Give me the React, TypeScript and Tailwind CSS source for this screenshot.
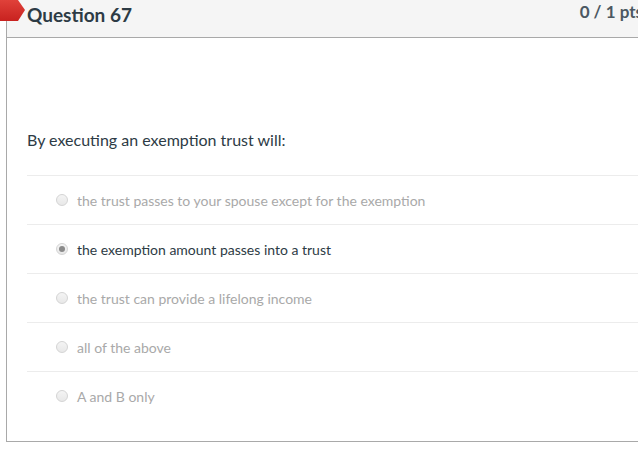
const answers = [
  { text: "the trust passes to your spouse except for the exemption", selected: false },
  { text: "the exemption amount passes into a trust", selected: true },
  { text: "the trust can provide a lifelong income", selected: false },
  { text: "all of the above", selected: false },
  { text: "A and B only", selected: false },
];

function Radio({ checked }: { checked: boolean }) {
  return (
    <span className="w-[12px] h-[12px] rounded-full border border-[#d4d4d4] bg-gradient-to-b from-[#f4f4f4] to-[#e8e8e8] flex items-center justify-center flex-shrink-0">
      {checked && <span className="w-[6px] h-[6px] rounded-full bg-[#8a8a8a]" />}
    </span>
  );
}

export default function App() {
  return (
    <div className="w-[638px] h-[469px] overflow-hidden bg-white font-['Lato','Noto_Sans',sans-serif] relative">
      {/* Red flag */}
      <svg className="absolute left-0 top-0 z-10" width="26" height="22" viewBox="0 0 26 22">
        <defs>
          <linearGradient id="flag" x1="0" y1="0" x2="0" y2="1">
            <stop offset="0" stopColor="#e0413a" />
            <stop offset="1" stopColor="#c8221f" />
          </linearGradient>
        </defs>
        <polygon points="0,0 18,0 25,10 18,21 0,21" fill="url(#flag)" />
      </svg>

      <div className="ml-[6px] w-[650px] border-l border-b border-[#a9a9a9]">
        {/* Header */}
        <div className="h-[38px] bg-[#f5f5f5] border-b border-[#a9a9a9] flex items-start justify-between pl-[20px] pr-[13px]">
          <h2 className="text-[19px] font-bold text-[#2d3b45] leading-none mt-[5px]">Question 67</h2>
          <span className="text-[17px] font-bold text-[#4c5862] leading-none mt-[3px]">0 / 1 pts</span>
        </div>

        {/* Body */}
        <div className="pl-[20px]">
          <p className="text-[16px] text-[#2d3b45] leading-none pt-[94px] pb-[27px]">
            By executing an exemption trust will:
          </p>
          <div>
            {answers.map((a, i) => (
              <div
                key={i}
                className={`border-t border-[#ececec] ${i === answers.length - 1 ? "pb-[21px]" : ""}`}
              >
                <div className="h-[48px] flex items-center gap-[9px] pl-[29px]">
                  <Radio checked={a.selected} />
                  <span className={`text-[14px] ${a.selected ? "text-[#2d3b45]" : "text-[#a9a9a9]"}`}>
                    {a.text}
                  </span>
                </div>
              </div>
            ))}
          </div>
        </div>
      </div>
    </div>
  );
}
